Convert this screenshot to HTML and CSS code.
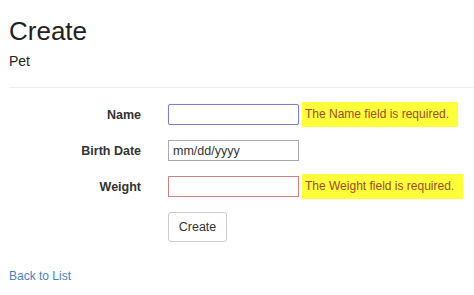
FILE: index.html
```html
<!DOCTYPE html>
<html>
<head>
<meta charset="utf-8">
<link rel="stylesheet" href="styles.css">
</head>
<body>
<div class="page">
  <h1 class="title">Create</h1>
  <h4 class="subtitle">Pet</h4>
  <hr class="rule">
  <form class="form">
    <div class="row">
      <label class="label">Name</label>
      <div class="field"><input class="input input-focus" type="text"></div>
      <span class="error">The Name field is required.</span>
    </div>
    <div class="row">
      <label class="label">Birth Date</label>
      <div class="field"><input class="input" type="text" value="mm/dd/yyyy"></div>
    </div>
    <div class="row">
      <label class="label">Weight</label>
      <div class="field"><input class="input input-error" type="text"></div>
      <span class="error">The Weight field is required.</span>
    </div>
    <div class="row">
      <div class="label"></div>
      <div class="field"><button class="btn" type="button">Create</button></div>
    </div>
  </form>
  <a class="back" href="#">Back to List</a>
</div>
</body>
</html>
```
FILE: styles.css
```css
html, body {
  margin: 0;
  padding: 0;
  background: #ffffff;
}
body {
  font-family: "Liberation Sans", Arial, sans-serif;
  color: #333333;
}
.page {
  padding: 0 0 0 9px;
}
.title {
  margin: 0;
  padding-top: 16px;
  font-size: 26px;
  font-weight: normal;
  line-height: 30px;
  color: #222;
}
.subtitle {
  margin: 7px 0 0 0;
  font-size: 14px;
  font-weight: normal;
  line-height: 16px;
  color: #222;
}
.rule {
  margin: 18px 0 0 0;
  border: 0;
  border-top: 1px solid #eeeeee;
  height: 0;
}
.form {
  display: flex;
  flex-direction: column;
  gap: 15px;
  margin-top: 16px;
}
.row {
  display: flex;
  align-items: center;
  height: 21px;
}
.label {
  width: 132px;
  text-align: right;
  font-weight: bold;
  font-size: 12.5px;
  color: #333;
  padding-right: 27px;
}
.field {
  display: flex;
}
.input {
  box-sizing: border-box;
  width: 131px;
  height: 21px;
  margin: 0;
  padding: 0 4px;
  border: 1px solid #aaaaaa;
  border-radius: 0;
  font-family: "Liberation Sans", Arial, sans-serif;
  font-size: 12.5px;
  color: #333;
  background: #fff;
  outline: none;
}
.input-focus {
  border: 1px solid #8080c8;
  border-radius: 2px;
  box-shadow: 0 0 1px rgba(100,100,200,0.4);
}
.input-error {
  border: 1px solid #d08080;
}
.error {
  margin-left: 3px;
  background: #ffff3a;
  color: #a04a2a;
  font-size: 12px;
  line-height: 25px;
  padding: 0 9px 0 3px;
}
.btn {
  box-sizing: border-box;
  height: 30px;
  width: 59px;
  margin-top: 9px;
  border: 1px solid #cccccc;
  border-radius: 3px;
  background: #fff;
  font-family: "Liberation Sans", Arial, sans-serif;
  font-size: 12.5px;
  color: #333;
  padding: 0;
}
.back {
  display: block;
  margin-top: 36px;
  font-size: 12px;
  color: #4a7fc0;
  text-decoration: none;
}
```
